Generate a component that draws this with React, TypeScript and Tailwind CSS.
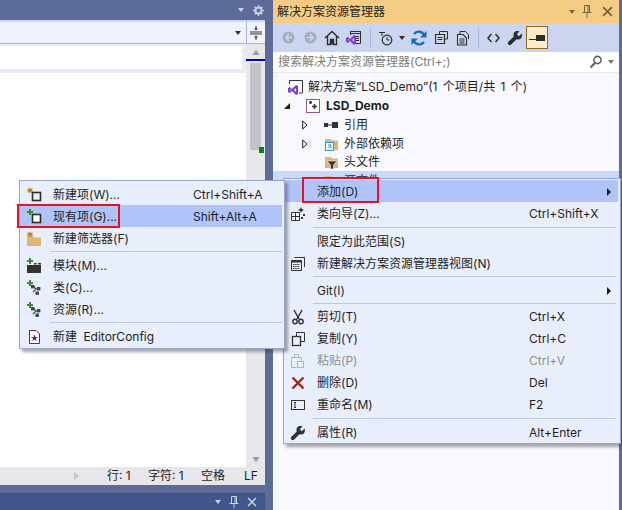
import React from "react";

const FONT = "font-['Inter','Noto_Sans_CJK_SC',sans-serif]";

function Svg({ children, size = 16, className = "" }: { children: React.ReactNode; size?: number; className?: string }) {
  return (
    <svg width={size} height={size} viewBox="0 0 16 16" className={"shrink-0 " + className}>
      {children}
    </svg>
  );
}

const VsBadge = ({ x = 0, y = 0 }: { x?: number; y?: number }) => (
  <path
    transform={`translate(${x} ${y})`}
    d="M0 4 L2 3 L4 5 L8 1 L10 2 V10 L8 11 L4 7 L2 9 L0 8 Z M2 5 V7 L3 6 Z M8 4 L6 6 L8 8 Z"
    fill="#7b3fd0"
    fillRule="evenodd"
  />
);

const PlusAccent = ({ color = "#388a34" }: { color?: string }) => (
  <path d="M3 0 H5 V2 H7 V4 H5 V6 H3 V4 H1 V2 H3 Z" fill={color} />
);

const Star = () => (
  <path d="M4 0 L4.8 2 L7 1.2 L5.8 3 L7.6 4 L5.4 4.4 L5.6 6.6 L4 5 L2.4 6.6 L2.6 4.4 L.4 4 L2.2 3 L1 1.2 L3.2 2 Z" fill="#c27d1a" />
);

const ItemBox = () => <rect x="6.5" y="5.5" width="8" height="8" fill="none" stroke="#2d2d2d" strokeWidth="1.6" />;

const ClassIcon = () => (
  <Svg>
    <PlusAccent />
    <path d="M7 6 L10 9 L7 12 M10 9 H13" fill="none" stroke="#424242" strokeWidth="1.2" />
    <rect x="5" y="5" width="3.4" height="3.4" fill="#424242" />
    <rect x="11" y="7" width="3.4" height="3.4" fill="#424242" />
    <rect x="9.5" y="11.5" width="3.4" height="3.4" fill="#424242" />
  </Svg>
);

const WrenchPath = ({ fill = "#333" }: { fill?: string }) => (
  <path d="M14.6 3.6 L11.8 6.2 L9.8 4.2 L12.4 1.4 C10.4.5 8 1 7 2.8 C6.3 4 6.3 5.4 6.8 6.4 L1.4 11.8 C.6 12.6.6 13.8 1.4 14.6 C2.2 15.4 3.4 15.4 4.2 14.6 L9.6 9.2 C11 9.8 12.6 9.6 13.8 8.4 C15 7.2 15.2 5.2 14.6 3.6 Z" fill={fill} />
);

type MenuEntry = {
  label?: string;
  shortcut?: string;
  icon?: React.ReactNode;
  active?: boolean;
  disabled?: boolean;
  submenu?: boolean;
  separator?: string;
};

const addItems: MenuEntry[] = [
  { label: "新建项(W)...", shortcut: "Ctrl+Shift+A", icon: <Svg><Star /><ItemBox /></Svg> },
  { label: "现有项(G)...", shortcut: "Shift+Alt+A", active: true, icon: <Svg><PlusAccent /><rect x="6.5" y="5.5" width="8" height="8" fill="#fff" stroke="#2d2d2d" strokeWidth="1.6" /></Svg> },
  {
    label: "新建筛选器(F)",
    icon: (
      <Svg>
        <path d="M1 5 H7 L8 6.5 H15 V15 H1 Z" fill="#dcb67a" />
        <Star />
      </Svg>
    ),
  },
  { separator: "h-[5px]" },
  {
    label: "模块(M)...",
    icon: (
      <Svg>
        <PlusAccent />
        <path d="M1 7 H15 V15 H1 Z" fill="#333" />
        <path d="M8 5 H10.5 V6.5 H8 Z M12 5 H15 V6.5 H12 Z" fill="#333" />
      </Svg>
    ),
  },
  { label: "类(C)...", icon: <ClassIcon /> },
  { label: "资源(R)...", icon: <ClassIcon /> },
  { separator: "h-[5px]" },
  {
    label: "新建 EditorConfig",
    icon: (
      <Svg>
        <path d="M3.5 1.5 H10 L13.5 5 V14.5 H3.5 Z" fill="#fff" stroke="#68217a" />
        <path d="M8.5 5.5 L9.4 8 H12 L9.9 9.5 L10.7 12 L8.5 10.5 L6.3 12 L7.1 9.5 L5 8 H7.6 Z" fill="#68217a" />
      </Svg>
    ),
  },
];

const contextItems: MenuEntry[] = [
  { label: "添加(D)", active: true, submenu: true },
  {
    label: "类向导(Z)...",
    shortcut: "Ctrl+Shift+X",
    icon: (
      <Svg>
        <path d="M1.5 6.5 H9.5 V14.5 H1.5 Z M1.5 10.5 H9.5 M5.5 6.5 V14.5" fill="none" stroke="#333" />
        <path d="M11 1 L12 3 L14 4 L12 5 L11 7 L10 5 L8 4 L10 3 Z" fill="#333" />
        <rect x="13" y="8" width="2" height="2" fill="#333" />
        <rect x="11" y="11" width="2" height="2" fill="#333" />
      </Svg>
    ),
  },
  { separator: "h-[6px]" },
  { label: "限定为此范围(S)" },
  {
    label: "新建解决方案资源管理器视图(N)",
    icon: (
      <Svg>
        <path d="M4.5 1.5 H14.5 V11 M1.5 4.5 H11.5 V14.5 H1.5 Z" fill="none" stroke="#333" />
        <path d="M1.5 4.5 H11.5 V6.5 H1.5 Z" fill="#333" />
        <path d="M3 8.5 H10 M3 10.5 H10 M3 12.5 H10" stroke="#333" strokeDasharray="1.5 .7" />
      </Svg>
    ),
  },
  { separator: "h-[5px]" },
  { label: "Git(I)", submenu: true },
  { separator: "h-[4px]" },
  {
    label: "剪切(T)",
    shortcut: "Ctrl+X",
    icon: (
      <Svg>
        <path d="M4 1 L9 10 M12 1 L7 10" fill="none" stroke="#333" strokeWidth="1.5" />
        <circle cx="5" cy="12.5" r="2.2" fill="none" stroke="#333" strokeWidth="1.4" />
        <circle cx="11" cy="12.5" r="2.2" fill="none" stroke="#333" strokeWidth="1.4" />
      </Svg>
    ),
  },
  {
    label: "复制(Y)",
    shortcut: "Ctrl+C",
    icon: (
      <Svg>
        <path d="M6.5 5 V1.5 H14.5 V10.5 H10.5" fill="none" stroke="#333" />
        <rect x="2.5" y="5.5" width="8" height="9" fill="none" stroke="#333" strokeWidth="1.3" />
      </Svg>
    ),
  },
  {
    label: "粘贴(P)",
    shortcut: "Ctrl+V",
    disabled: true,
    icon: (
      <Svg>
        <path d="M1.5 4.5 H11.5 V7.5 M1.5 4.5 V14.5 H6.5" fill="none" stroke="#b5b5b5" />
        <rect x="7.5" y="8.5" width="6" height="6" fill="none" stroke="#b5b5b5" />
        <path d="M4.5 4 V1.5 H8.5 V4" fill="none" stroke="#b5b5b5" />
      </Svg>
    ),
  },
  {
    label: "删除(D)",
    shortcut: "Del",
    icon: (
      <Svg>
        <path d="M2.5 2.5 L13.5 13.5 M13.5 2.5 L2.5 13.5" stroke="#a1260d" strokeWidth="2.4" />
      </Svg>
    ),
  },
  {
    label: "重命名(M)",
    shortcut: "F2",
    icon: (
      <Svg>
        <rect x="1.5" y="3.5" width="13" height="9" fill="none" stroke="#333" />
        <path d="M4 5.5 H6 M4 10.5 H6 M5 5.5 V10.5" fill="none" stroke="#333" />
      </Svg>
    ),
  },
  { separator: "h-[6px]" },
  {
    label: "属性(R)",
    shortcut: "Alt+Enter",
    icon: (
      <Svg>
        <WrenchPath />
      </Svg>
    ),
  },
];

function MenuRows({ items, sepMargin, shortcutWidth }: { items: MenuEntry[]; sepMargin: string; shortcutWidth: string }) {
  return (
    <>
      {items.map((item, i) =>
        item.separator ? (
          <div key={i} className={"flex items-center " + item.separator + " " + sepMargin}>
            <div className="h-px w-full bg-[#bcc7e6]" />
          </div>
        ) : (
          <div
            key={i}
            className={
              "h-[22px] pt-[2px] flex items-center text-xs [word-spacing:3px] " +
              (item.active ? "bg-[#b0c4fa] " : "") +
              (item.disabled ? "text-[#8f8f8f]" : "text-[#1e1e1e]")
            }
          >
            <div className="w-[33px] pl-[6px] flex justify-start">{item.icon}</div>
            <span className="flex-1 whitespace-nowrap">{item.label}</span>
            {item.shortcut && <span className={"whitespace-nowrap " + shortcutWidth}>{item.shortcut}</span>}
            {item.submenu && (
              <span className="mr-[7px] h-0 w-0 border-y-[4px] border-l-[4px] border-y-transparent border-l-[#1e1e1e]" />
            )}
          </div>
        )
      )}
    </>
  );
}

function ToolGlyph({ children }: { children: React.ReactNode }) {
  return <div className="w-[22px] flex justify-center items-center">{children}</div>;
}

const ToolDivider = ({ margin }: { margin: string }) => <div className={"w-px h-5 bg-[#a9b6d6] " + margin} />;

function Chevron({ color = "#444" }: { color?: string }) {
  return <span className="h-0 w-0 border-x-[3.5px] border-t-[4px] border-x-transparent" style={{ borderTopColor: color }} />;
}

function TreeRow({
  arrow,
  indent,
  icon,
  label,
  bold,
  slot = "w-[22px]",
  height = "h-[19px]",
}: {
  arrow?: "open" | "closed";
  indent: string;
  icon: React.ReactNode;
  label: string;
  bold?: boolean;
  slot?: string;
  height?: string;
}) {
  return (
    <div className={"flex items-center text-xs text-[#1e1e1e] [word-spacing:2px] " + height + " " + indent}>
      <div className={"flex items-center " + slot}>
        {arrow === "open" && <span className="h-0 w-0 border-b-[6px] border-l-[6px] border-b-[#1e1e1e] border-l-transparent" />}
        {arrow === "closed" && (
          <svg width="6" height="10" viewBox="0 0 6 10">
            <path d="M.7 1 L5 5 L.7 9 Z" fill="#fff" stroke="#1e1e1e" />
          </svg>
        )}
      </div>
      <div className="w-[20px] flex justify-start">{icon}</div>
      <span className={"whitespace-nowrap " + (bold ? "font-bold" : "")}>{label}</span>
    </div>
  );
}

function LeftPane() {
  return (
    <div className="w-[265px] shrink-0 flex flex-col">
      <div className="h-5 bg-[#5d6b99] flex items-center justify-end gap-[9px] pr-[1px]">
        <Chevron color="#ced4dd" />
        <svg width="11" height="11" viewBox="0 0 12 12">
          <circle cx="6" cy="6" r="3.4" fill="none" stroke="#ced4dd" strokeWidth="2.2" />
          <path d="M6 0 V12 M0 6 H12 M1.8 1.8 L10.2 10.2 M10.2 1.8 L1.8 10.2" stroke="#ced4dd" strokeWidth="1.5" strokeDasharray="2 8" />
        </svg>
      </div>
      <div className="h-[24px] pt-[2px] bg-[#ccd5f0] flex">
        <div className="flex-1 bg-[#eff3fd] border-b border-[#a3b3da] flex items-center justify-end pr-[5px]">
          <Chevron color="#333" />
        </div>
        <div className="w-[19px] bg-[#eff3fd] border-l border-b border-[#a3b3da] flex items-center justify-center">
          <svg width="12" height="14" viewBox="0 0 12 14">
            <path d="M0 6 H12 M0 8 H12" stroke="#333" />
            <path d="M6 0 V4 M6 10 V14" stroke="#333" />
            <path d="M4 2.5 L6 4.5 L8 2.5 Z M4 11.5 L6 9.5 L8 11.5 Z" fill="#333" />
          </svg>
        </div>
      </div>
      <div className="flex-1 flex min-h-0">
        <div className="flex-1 bg-white">
          <div className="h-[29px] bg-[#e9ecf6] pr-1 pt-[2px] pb-1">
            <div className="h-full bg-white" />
          </div>
        </div>
        <div className="w-[19px] bg-[#e8e8ec] flex flex-col items-center relative">
          <span className="mt-[6px] h-0 w-0 border-x-[4.5px] border-b-[5px] border-x-transparent border-b-[#9aa0ad]" />
          <div className="mt-[4px] h-[2px] w-full bg-[#0000cd]" />
          <div className="mt-[2px] w-[11px] h-[87px] bg-[#c2c3c9]" />
          <div className="absolute left-[13px] top-[103px] w-[5px] h-[6px] bg-[#108010]" />
          <div className="flex-1" />
          <span className="mb-[5px] h-0 w-0 border-x-[4.5px] border-t-[5px] border-x-transparent border-t-[#9aa0ad]" />
        </div>
      </div>
      <div className="h-[18px] bg-[#e6e6eb] flex items-center text-xs text-[#1e1e1e] pl-[74px]">
        <span className="h-0 w-0 border-y-[4.5px] border-l-[5px] border-y-transparent border-l-[#c2c3c9]" />
        <span className="ml-[28px] w-[41px] whitespace-nowrap">行: 1</span>
        <span className="w-[53px] whitespace-nowrap">字符: 1</span>
        <span className="w-[43px] whitespace-nowrap">空格</span>
        <span>LF</span>
      </div>
      <div className="h-2 bg-[#5d6b99]" />
      <div className="h-[17px] bg-[#40568d] flex items-center justify-end gap-[8px] pr-[8px]">
        <Chevron color="#ced4dd" />
        <svg width="10" height="12" viewBox="0 0 10 12">
          <path d="M2.5 .5 H7.5 V7.5 H2.5 Z M6 1 V7 M.5 7.5 H9.5 M5 8 V12" fill="none" stroke="#ced4dd" />
        </svg>
        <svg width="10" height="10" viewBox="0 0 10 10">
          <path d="M1 1 L9 9 M9 1 L1 9" stroke="#ced4dd" strokeWidth="1.5" />
        </svg>
      </div>
    </div>
  );
}

function SolutionPane() {
  return (
    <div className="flex-1 flex flex-col bg-[#f8f9fe] min-w-0">
      <div className="h-[23px] bg-[#f5cc84] flex items-center pl-1 pr-[7px] text-xs text-[#1e1e1e]">
        <span className="flex-1 whitespace-nowrap">解决方案资源管理器</span>
        <div className="flex items-center gap-[7px] mr-[-1px]">
          <Chevron color="#75633d" />
          <svg width="10" height="13" viewBox="0 0 10 13">
            <path d="M2.5 .5 H7.5 V7.5 H2.5 Z M6 1 V7 M.5 7.5 H9.5 M5 8 V13" fill="none" stroke="#75633d" />
          </svg>
          <svg width="11" height="11" viewBox="0 0 10 10" className="ml-[3px]">
            <path d="M1 1 L9 9 M9 1 L1 9" stroke="#75633d" strokeWidth="1.5" />
          </svg>
        </div>
      </div>
      <div className="h-[29px] bg-[#ccd5f0] flex items-center pl-[4px]">
        <ToolGlyph>
          <svg width="13" height="13" viewBox="0 0 13 13">
            <circle cx="6.5" cy="6.5" r="6" fill="#a6adbc" />
            <path d="M7 3 L4 6.5 L7 10 M4.5 6.5 H10" fill="none" stroke="#ccd5f0" strokeWidth="1.6" />
          </svg>
        </ToolGlyph>
        <ToolGlyph>
          <svg width="13" height="13" viewBox="0 0 13 13">
            <circle cx="6.5" cy="6.5" r="6" fill="#a6adbc" />
            <path d="M6 3 L9 6.5 L6 10 M8.5 6.5 H3" fill="none" stroke="#ccd5f0" strokeWidth="1.6" />
          </svg>
        </ToolGlyph>
        <ToolGlyph>
          <Svg>
            <path d="M1 8 L8 1.5 L15 8 M3.5 6.5 V14.5 H6.5 V9.5 H9.5 V14.5 H12.5 V6.5" fill="none" stroke="#2d2d2d" strokeWidth="1.4" />
            <rect x="6.5" y="9.5" width="3" height="5" fill="#2d2d2d" />
          </Svg>
        </ToolGlyph>
        <ToolGlyph>
          <Svg>
            <path d="M4.5 5 V1.5 H14.5 V13.5 H9" fill="none" stroke="#2d2d2d" />
            <path d="M4.5 1.5 H14.5 V3.5 H4.5 Z M7 6.5 H13 M9 8.5 H13 M10 10.5 H13" stroke="#2d2d2d" fill="none" />
            <VsBadge x={0} y={4} />
          </Svg>
        </ToolGlyph>
        <ToolDivider margin="ml-[5px] mr-[3px]" />
        <div className="w-[32px] flex items-center gap-[5px] pl-[4px]">
          <Svg>
            <circle cx="9" cy="10" r="4.8" fill="none" stroke="#2d2d2d" strokeWidth="1.2" />
            <path d="M9 7 V10 H11.5 M1 2.5 H7 M4 2.5 V6" fill="none" stroke="#2d2d2d" />
          </Svg>
          <Chevron color="#2d2d2d" />
        </div>
        <div className="w-[2px]" />
        <ToolGlyph>
          <Svg>
            <path d="M13.5 6 A6 6 0 0 0 3 4 M2.5 10 A6 6 0 0 0 13 12" fill="none" stroke="#0e70c0" strokeWidth="2.4" />
            <path d="M15.5 1 V7.5 H9 Z M.5 15 V8.5 H7 Z" fill="#0e70c0" />
          </Svg>
        </ToolGlyph>
        <ToolGlyph>
          <svg width="13" height="13" viewBox="0 0 13 13">
            <path d="M4.5 3 V.5 H12.5 V8 H10" fill="none" stroke="#2d2d2d" />
            <path d="M.5 3.5 H9.5 V12.5 H.5 Z" fill="none" stroke="#2d2d2d" strokeWidth="1.2" />
            <path d="M2.5 6.5 H7.5 M2.5 8.5 H7.5" stroke="#2d2d2d" />
          </svg>
        </ToolGlyph>
        <ToolGlyph>
          <Svg>
            <path d="M5 4 V1.5 H10.5 L13.5 4.5 V9" fill="none" stroke="#2d2d2d" />
            <path d="M2.5 4.5 H8 L11.5 8 V15 H2.5 Z" fill="none" stroke="#2d2d2d" strokeWidth="1.1" />
            <path d="M4.5 9 H9.5 M4.5 11 H9.5 M4.5 13 H9.5" stroke="#2d2d2d" />
          </Svg>
        </ToolGlyph>
        <ToolDivider margin="ml-[4px] mr-[3px]" />
        <ToolGlyph>
          <svg width="13" height="10" viewBox="0 0 13 10">
            <path d="M4.5 1 L1 5 L4.5 9 M8.5 1 L12 5 L8.5 9" fill="none" stroke="#2d2d2d" strokeWidth="1.5" />
          </svg>
        </ToolGlyph>
        <ToolGlyph>
          <Svg>
            <WrenchPath fill="#2d2d2d" />
          </Svg>
        </ToolGlyph>
        <div className="w-[22px] h-[23px] bg-[#fdeccb] border border-[#8f6c1d] flex items-center justify-center">
          <svg width="16" height="8" viewBox="0 0 16 8">
            <path d="M0 5.5 H7" stroke="#2d2d2d" />
            <rect x="7" y="1" width="9" height="6" fill="#2d2d2d" />
          </svg>
        </div>
      </div>
      <div className="h-[21px] mb-[1px] bg-white flex items-center pl-[5px] pr-[5px] border-b border-[#e4e8f5]">
        <span className="flex-1 text-xs text-[#7a7a7a] whitespace-nowrap">搜索解决方案资源管理器(Ctrl+;)</span>
        <svg width="14" height="14" viewBox="0 0 14 14" className="mr-[5px]">
          <circle cx="8.5" cy="5" r="3.6" fill="none" stroke="#5f5f5f" strokeWidth="1.6" />
          <path d="M6 8 L1.5 12.5" stroke="#5f5f5f" strokeWidth="2.2" />
        </svg>
        <Chevron color="#777" />
      </div>
      <div className="pt-[4px]">
        <TreeRow
          indent=""
          slot="w-[15px]"
          height="h-[18px]"
          icon={
            <Svg>
              <path d="M1.5 5 V1.5 H14.5 V14 H11 M1.5 1.5 H14.5" fill="none" stroke="#333" />
              <VsBadge x={0} y={5} />
            </Svg>
          }
          label="解决方案“LSD_Demo”(1 个项目/共 1 个)"
        />
        <TreeRow
          arrow="open"
          indent="pl-[11px]"
          icon={
            <svg width="14" height="14" viewBox="0 0 14 14">
              <rect x=".5" y=".5" width="13" height="13" fill="#fff" stroke="#9b4f96" />
              <path d="M3 3.5 H6 M4.5 2 V5 M6 7.5 H11 M8.5 5 V10" stroke="#333" strokeWidth="1.6" />
            </svg>
          }
          label="LSD_Demo"
          bold
        />
        <TreeRow
          arrow="closed"
          indent="pl-[29px]"
          icon={
            <svg width="15" height="8" viewBox="0 0 15 8" className="mt-[1px]">
              <rect x="0" y="2" width="4" height="4" fill="#333" />
              <path d="M4 4 H8" stroke="#333" />
              <rect x="8" y="1" width="6" height="6" fill="#333" />
            </svg>
          }
          label="引用"
        />
        <TreeRow
          arrow="closed"
          indent="pl-[29px]"
          icon={
            <Svg>
              <path d="M1 3 H7 L8 4.5 H14 V14 H1 Z" fill="#dcb67a" />
              <rect x="1.5" y="6.5" width="8" height="8" fill="#fff" stroke="#1b9ce0" />
              <path d="M4 9 H7 V12 M4 12 L7 9" fill="none" stroke="#1b9ce0" />
            </Svg>
          }
          label="外部依赖项"
        />
        <TreeRow
          indent="pl-[29px]"
          height="h-[18px]"
          icon={
            <Svg>
              <path d="M1 3 H7 L8 4.5 H14 V14 H1 Z" fill="#dcb67a" />
              <path d="M3 7 H13 L9.5 11 V15 H6.5 V11 Z" fill="#333" stroke="#fff" strokeWidth=".6" />
            </Svg>
          }
          label="头文件"
        />
        <div className="bg-[#c9d8fb]">
          <TreeRow
            indent="pl-[29px]"
            icon={
              <Svg>
                <path d="M1 3 H7 L8 4.5 H14 V14 H1 Z" fill="#dcb67a" />
              </Svg>
            }
            label="源文件"
          />
        </div>
      </div>
    </div>
  );
}

export default function App() {
  return (
    <div className={"relative w-[622px] h-[510px] overflow-hidden bg-[#5d6b99] flex " + FONT}>
      <LeftPane />
      <div className="w-2 shrink-0" />
      <SolutionPane />
      <div className="w-[3px] shrink-0" />

      {/* context menu for the project */}
      <div className="absolute left-[283px] top-[178px] w-[338px] bg-[#e9eefc] border border-[#98a6cc] pt-[1px] pr-[2px] shadow-[3px_3px_3px_rgba(60,60,70,0.45)]">
        <MenuRows items={contextItems} sepMargin="ml-[29px] mr-[2px]" shortcutWidth="w-[89px]" />
      </div>

      {/* add submenu */}
      <div className="absolute left-[19px] top-[180px] w-[266px] bg-[#e9eefc] border border-[#98a6cc] pt-[2px] pb-[1px] pr-[2px] shadow-[3px_3px_3px_rgba(60,60,70,0.45)]">
        <MenuRows items={addItems} sepMargin="ml-[30px]" shortcutWidth="w-[89px]" />
      </div>

      {/* red callouts */}
      <div className="absolute left-[17px] top-[204px] w-[103px] h-[24px] border-2 border-[#e81123]" />
      <div className="absolute left-[302px] top-[177px] w-[77px] h-[26px] border-2 border-[#e81123]" />
    </div>
  );
}
